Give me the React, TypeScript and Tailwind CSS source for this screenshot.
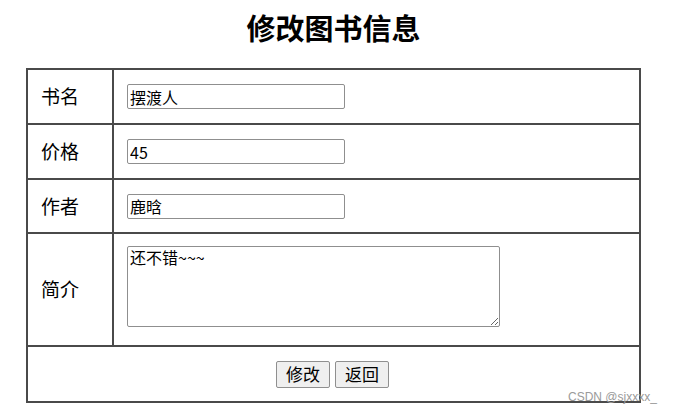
import React from "react";

const font = { fontFamily: '"Microsoft YaHei", "Noto Sans CJK SC", "Noto Sans", sans-serif' };

export default function App() {
  const labelCls = "border-2 border-[#4a4a4a] pl-[13px] text-[19px] text-black align-middle";
  const cellCls = "border-2 border-[#4a4a4a] pl-[13px] align-middle";
  const inputCls =
    "block w-[218px] h-[25px] border border-[#8f8f8f] rounded-[2px] bg-white px-[2px] text-[16px] text-black outline-none";
  const btnCls =
    "h-[27px] px-[9px] border border-[#8f8f8f] rounded-[2px] bg-[#efefef] text-[17px] leading-[20px] text-black";
  return (
    <div className="relative w-[673px] h-[414px] bg-white overflow-hidden" style={font}>
      <h2 className="h-[68px] pt-[7px] text-center text-[29px] font-bold leading-[40px] text-black pr-[6px]">
        修改图书信息
      </h2>
      <table className="ml-[26px] w-[615px] border-collapse border-2 border-[#4a4a4a]">
        <tbody>
          <tr className="h-[55px]">
            <td className={labelCls + " w-[86px]"}>书名</td>
            <td className={cellCls}>
              <input className={inputCls} defaultValue="摆渡人" style={font} />
            </td>
          </tr>
          <tr className="h-[55px]">
            <td className={labelCls}>价格</td>
            <td className={cellCls}>
              <input className={inputCls} defaultValue="45" style={font} />
            </td>
          </tr>
          <tr className="h-[54px]">
            <td className={labelCls}>作者</td>
            <td className={cellCls}>
              <input className={inputCls} defaultValue="鹿晗" style={font} />
            </td>
          </tr>
          <tr className="h-[113px]">
            <td className={labelCls}>简介</td>
            <td className="border-2 border-[#4a4a4a] pl-[13px] pt-[12px] pb-[17px] align-top">
              <textarea
                className="block w-[373px] h-[81px] border border-[#8f8f8f] rounded-[2px] bg-white px-[2px] py-0 text-[16px] leading-[20px] text-black outline-none resize"
                defaultValue="还不错~~~"
                style={font}
              />
            </td>
          </tr>
          <tr className="h-[56px]">
            <td colSpan={2} className="border-2 border-[#4a4a4a] text-center align-middle">
              <div className="flex justify-center gap-[5px] pr-[2px]">
                <button className={btnCls} style={font}>
                  修改
                </button>
                <button className={btnCls} style={font}>
                  返回
                </button>
              </div>
            </td>
          </tr>
        </tbody>
      </table>
      <div className="absolute left-[568px] top-[389px] text-[12px] text-[#9a9a9a] leading-[16px]" style={{ fontFamily: '"Liberation Sans", Arial, sans-serif' }}>
        CSDN @sjxxxx_
      </div>
    </div>
  );
}
